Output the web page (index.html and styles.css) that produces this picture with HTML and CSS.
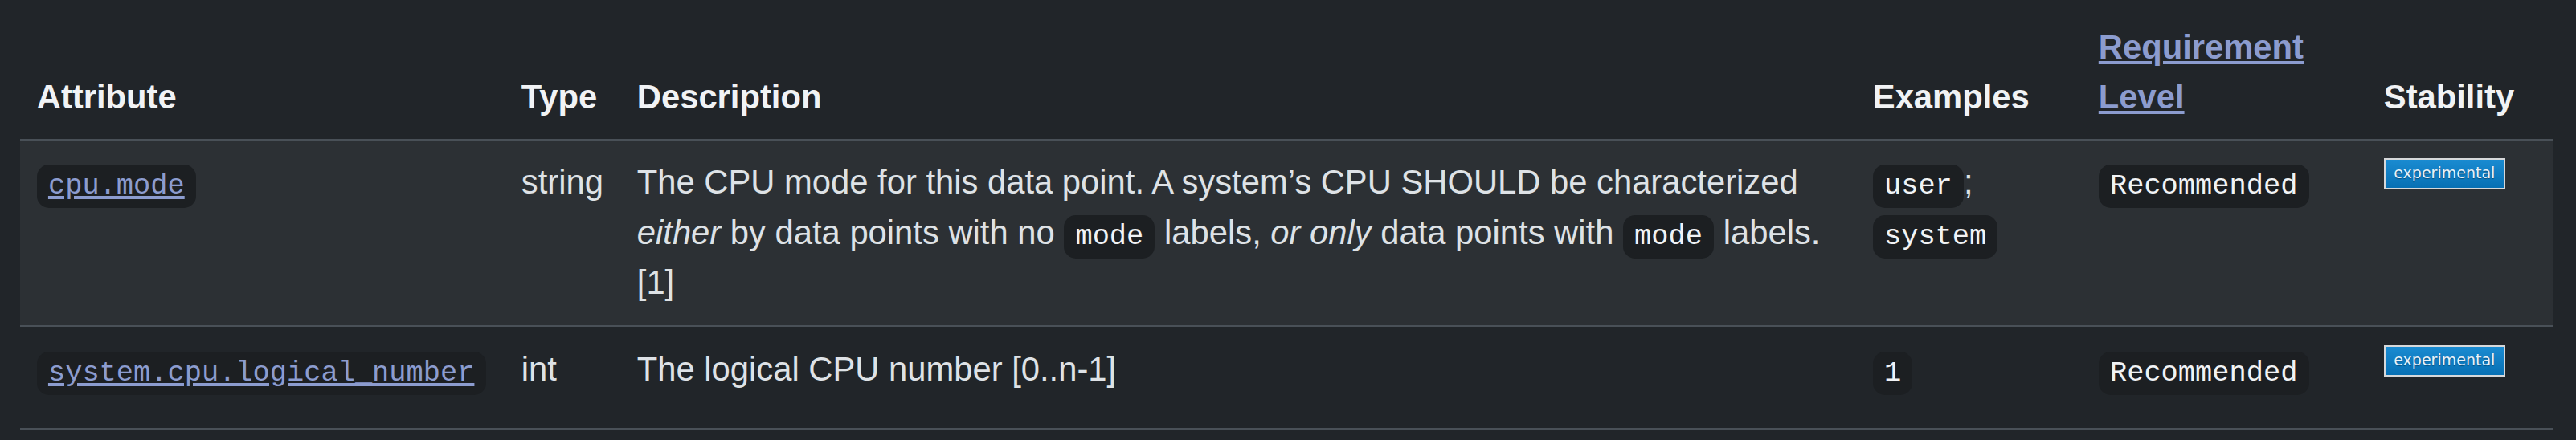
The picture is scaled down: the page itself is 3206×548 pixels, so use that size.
FILE: index.html
```html
<!DOCTYPE html>
<html lang="en">
<head>
<meta charset="utf-8">
<title>CPU attributes</title>
<link rel="stylesheet" href="styles.css">
</head>
<body>
<div class="page">
  <table class="attr-table">
    <colgroup>
      <col class="c-attr">
      <col class="c-type">
      <col class="c-desc">
      <col class="c-ex">
      <col class="c-req">
      <col class="c-stab">
    </colgroup>
    <thead>
      <tr>
        <th>Attribute</th>
        <th>Type</th>
        <th>Description</th>
        <th>Examples</th>
        <th><a href="#req">Requirement Level</a></th>
        <th>Stability</th>
      </tr>
    </thead>
    <tbody>
      <tr class="striped">
        <td><a href="#cpu-mode"><code>cpu.mode</code></a></td>
        <td>string</td>
        <td>The CPU mode for this data point. A system’s CPU SHOULD be characterized <em>either</em> by data points with no <code>mode</code> labels, <em>or only</em> data points with <code>mode</code> labels. [1]</td>
        <td><code>user</code>; <code>system</code></td>
        <td><code>Recommended</code></td>
        <td><span class="badge">experimental</span></td>
      </tr>
      <tr class="last">
        <td><a href="#cpu-logical"><code>system.cpu.logical_number</code></a></td>
        <td>int</td>
        <td>The logical CPU number [0..n-1]</td>
        <td><code>1</code></td>
        <td><code>Recommended</code></td>
        <td><span class="badge">experimental</span></td>
      </tr>
    </tbody>
  </table>
</div>
</body>
</html>
```

FILE: styles.css
```css
html, body {
  margin: 0;
  padding: 0;
  background: #212529;
}

.page {
  padding: 7px 0 0 25px;
  font-family: "Liberation Sans", Arial, sans-serif;
  font-size: 41.75px;
  line-height: 1.495;
  color: #dee2e6;
}

.attr-table {
  width: 3152px;
  border-collapse: collapse;
  table-layout: fixed;
}

.c-attr { width: 603px; }
.c-type { width: 144px; }
.c-desc { width: 1538px; }
.c-ex { width: 281px; }
.c-req { width: 355px; }
.c-stab { width: 231px; }

.attr-table th,
.attr-table td {
  padding: 20.8px;
  text-align: left;
  vertical-align: top;
}

.attr-table th {
  font-weight: bold;
  vertical-align: bottom;
  color: #f1f3f5;
  border-bottom: 2px solid #495057;
}

.attr-table td {
  border-bottom: 2px solid #495057;
}

.attr-table tr.striped td {
  background: #2c3034;
}

.attr-table tr.last td {
  padding-top: 22px;
  padding-bottom: 41px;
}

.attr-table a {
  color: #8c9ccf;
  text-decoration: underline;
}

.attr-table code {
  font-family: "Liberation Mono", "Courier New", monospace;
  font-size: 84.7%;
  padding: 0.2em 0.4em;
  background: #1c1f22;
  border-radius: 15px;
  color: #f1f3f5;
}

.attr-table a code {
  color: #8c9ccf;
}

.attr-table em {
  font-style: italic;
}

.badge {
  display: inline-block;
  vertical-align: top;
  margin-top: 1px;
  box-sizing: border-box;
  width: 151px;
  height: 39px;
  border: 2px solid #d6d8da;
  background: linear-gradient(#1a8bd1, #0770b4);
  color: #e8f2fa;
  font-family: "DejaVu Sans", Verdana, sans-serif;
  font-size: 19px;
  line-height: 33px;
  text-align: center;
  text-shadow: 0 1px 1px rgba(0, 0, 0, 0.35);
}
```
